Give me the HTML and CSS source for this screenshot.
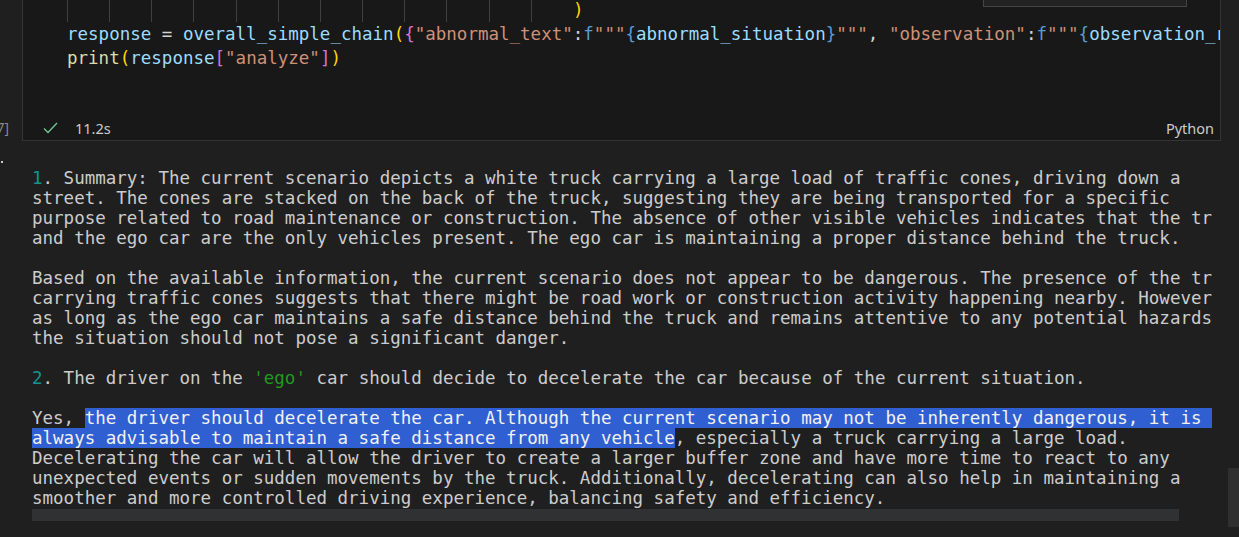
FILE: index.html
```html
<!DOCTYPE html>
<html>
<head>
<meta charset="utf-8">
<link rel="stylesheet" href="styles.css">
</head>
<body>
<div class="notebook">
  <div class="find-widget"></div>
  <div class="cell-row">
    <div class="gutter"><span class="exec">[7]</span></div>
    <div class="cell">
      <div class="code">
        <div class="line"><span class="ig">    </span><span class="ig">    </span><span class="ig">    </span><span class="ig">    </span><span class="ig">    </span><span class="ig">    </span><span class="ig">    </span><span class="ig">    </span><span class="ig">    </span><span class="ig">    </span><span class="ig">    </span><span class="ig">    </span><span class="b1">)</span></div>
        <div class="line"><span class="v">response</span><span class="p"> = </span><span class="v">overall_simple_chain</span><span class="b1">(</span><span class="b2">{</span><span class="s">"abnormal_text"</span><span class="p">:</span><span class="k">f</span><span class="s">"""</span><span class="k">{</span><span class="v">abnormal_situation</span><span class="k">}</span><span class="s">"""</span><span class="p">, </span><span class="s">"observation"</span><span class="p">:</span><span class="k">f</span><span class="s">"""</span><span class="k">{</span><span class="v">observation_result</span><span class="k">}</span><span class="s">"""</span><span class="b2">}</span><span class="b1">)</span></div>
        <div class="line"><span class="fn">print</span><span class="b1">(</span><span class="v">response</span><span class="b2">[</span><span class="s">"analyze"</span><span class="b2">]</span><span class="b1">)</span></div>
      </div>
      <div class="status">
        <svg class="check" width="15" height="12" viewBox="0 0 15 12"><polyline points="1,6.5 5,10.5 14,1" fill="none" stroke="#73c991" stroke-width="1.3"/></svg>
        <span class="time">11.2s</span>
        <span class="lang">Python</span>
      </div>
    </div>
    <div class="cell-right"></div>
  </div>
  <div class="output-row">
    <div class="out-gutter"><span class="dot"></span></div>
    <div class="output">
      <div class="out-text">
        <div class="ol"><span class="num">1</span>. Summary: The current scenario depicts a white truck carrying a large load of traffic cones, driving down a</div>
        <div class="ol">street. The cones are stacked on the back of the truck, suggesting they are being transported for a specific</div>
        <div class="ol">purpose related to road maintenance or construction. The absence of other visible vehicles indicates that the truck</div>
        <div class="ol">and the ego car are the only vehicles present. The ego car is maintaining a proper distance behind the truck.</div>
        <div class="ol"> </div>
        <div class="ol">Based on the available information, the current scenario does not appear to be dangerous. The presence of the truck</div>
        <div class="ol">carrying traffic cones suggests that there might be road work or construction activity happening nearby. However,</div>
        <div class="ol">as long as the ego car maintains a safe distance behind the truck and remains attentive to any potential hazards,</div>
        <div class="ol">the situation should not pose a significant danger.</div>
        <div class="ol"> </div>
        <div class="ol"><span class="num">2</span>. The driver on the <span class="str">'ego'</span> car should decide to decelerate the car because of the current situation.</div>
        <div class="ol"> </div>
        <div class="ol">Yes, <span class="sel">the driver should decelerate the car. Although the current scenario may not be inherently dangerous, it is </span></div>
        <div class="ol"><span class="sel">always advisable to maintain a safe distance from any vehicle</span>, especially a truck carrying a large load.</div>
        <div class="ol">Decelerating the car will allow the driver to create a larger buffer zone and have more time to react to any</div>
        <div class="ol">unexpected events or sudden movements by the truck. Additionally, decelerating can also help in maintaining a</div>
        <div class="ol">smoother and more controlled driving experience, balancing safety and efficiency.</div>
      </div>
      <div class="hscroll"></div>
    </div>
  </div>
  <div class="vscroll"></div>
</div>
</body>
</html>
```
FILE: styles.css
```css
html, body {
  margin: 0;
  padding: 0;
  background: #1f1f1f;
  width: 1239px;
  height: 537px;
  overflow: hidden;
}

.notebook {
  position: relative;
  width: 1239px;
  height: 537px;
  overflow: hidden;
}

.find-widget {
  position: absolute;
  left: 983px;
  top: -1px;
  width: 202px;
  height: 6px;
  background: #222222;
  border: 1px solid #454545;
  z-index: 2;
}

.cell-row {
  display: flex;
  height: 141px;
}

.gutter {
  width: 22px;
  flex: none;
  display: flex;
  justify-content: flex-end;
  align-items: flex-end;
  padding-right: 13px;
  box-sizing: border-box;
  padding-bottom: 1px;
}

.exec {
  font-family: "Noto Sans", sans-serif;
  font-size: 13.5px;
  line-height: 24px;
  color: #8b8b8b;
  white-space: pre;
  flex: none;
}

.cell {
  width: 1199px;
  flex: none;
  box-sizing: border-box;
  background: #181818;
  border-left: 1px solid #343434;
  border-right: 1px solid #343434;
  border-bottom: 1px solid #343434;
  display: flex;
  flex-direction: column;
}

.cell-right {
  flex: 1;
}

.code {
  margin-top: -2px;
  padding-left: 44px;
  padding-bottom: 46px;
  overflow: hidden;
  font-family: "DejaVu Sans Mono", monospace;
  font-size: 17.5px;
  color: #d4d4d4;
}

.line {
  height: 24px;
  line-height: 24px;
  white-space: pre;
}

.ig {
  display: inline-block;
  height: 24px;
  line-height: 24px;
  vertical-align: top;
  box-shadow: inset 1px 0 0 #404040;
}

.v { color: #9cdcfe; }
.p { color: #d4d4d4; }
.s { color: #ce9178; }
.k { color: #569cd6; }
.fn { color: #dcdcaa; }
.b1 { color: #ffd700; }
.b2 { color: #da70d6; }

.status {
  height: 24px;
  display: flex;
  align-items: center;
  padding-left: 20px;
  padding-right: 6px;
  font-family: "Noto Sans", sans-serif;
  font-size: 14.5px;
  color: #cccccc;
}

.check {
  flex: none;
}

.time {
  margin-left: 17px;
}

.lang {
  margin-left: auto;
}

.output-row {
  display: flex;
}

.out-gutter {
  width: 32px;
  flex: none;
}

.dot {
  display: block;
  width: 2px;
  height: 2px;
  margin-left: 1px;
  margin-top: 20px;
  background: #cccccc;
}

.output {
  width: 1180px;
  flex: none;
}

.out-text {
  padding-top: 27px;
  width: 1180px;
  overflow: hidden;
  font-family: "DejaVu Sans Mono", monospace;
  font-size: 17.5px;
  color: #cccccc;
}

.ol {
  height: 20px;
  line-height: 20px;
  white-space: pre;
}

.num { color: #13958f; }
.str { color: #1f9a1f; }

.sel {
  display: inline-block;
  height: 20px;
  line-height: 20px;
  background: #2f5fd1;
  color: #f2f2f2;
}

.hscroll {
  margin-top: 1px;
  width: 1147px;
  height: 12px;
  background: #303133;
}

.vscroll {
  position: absolute;
  left: 1228px;
  top: 468px;
  width: 11px;
  height: 59px;
  background: #2f2f2f;
}
```
